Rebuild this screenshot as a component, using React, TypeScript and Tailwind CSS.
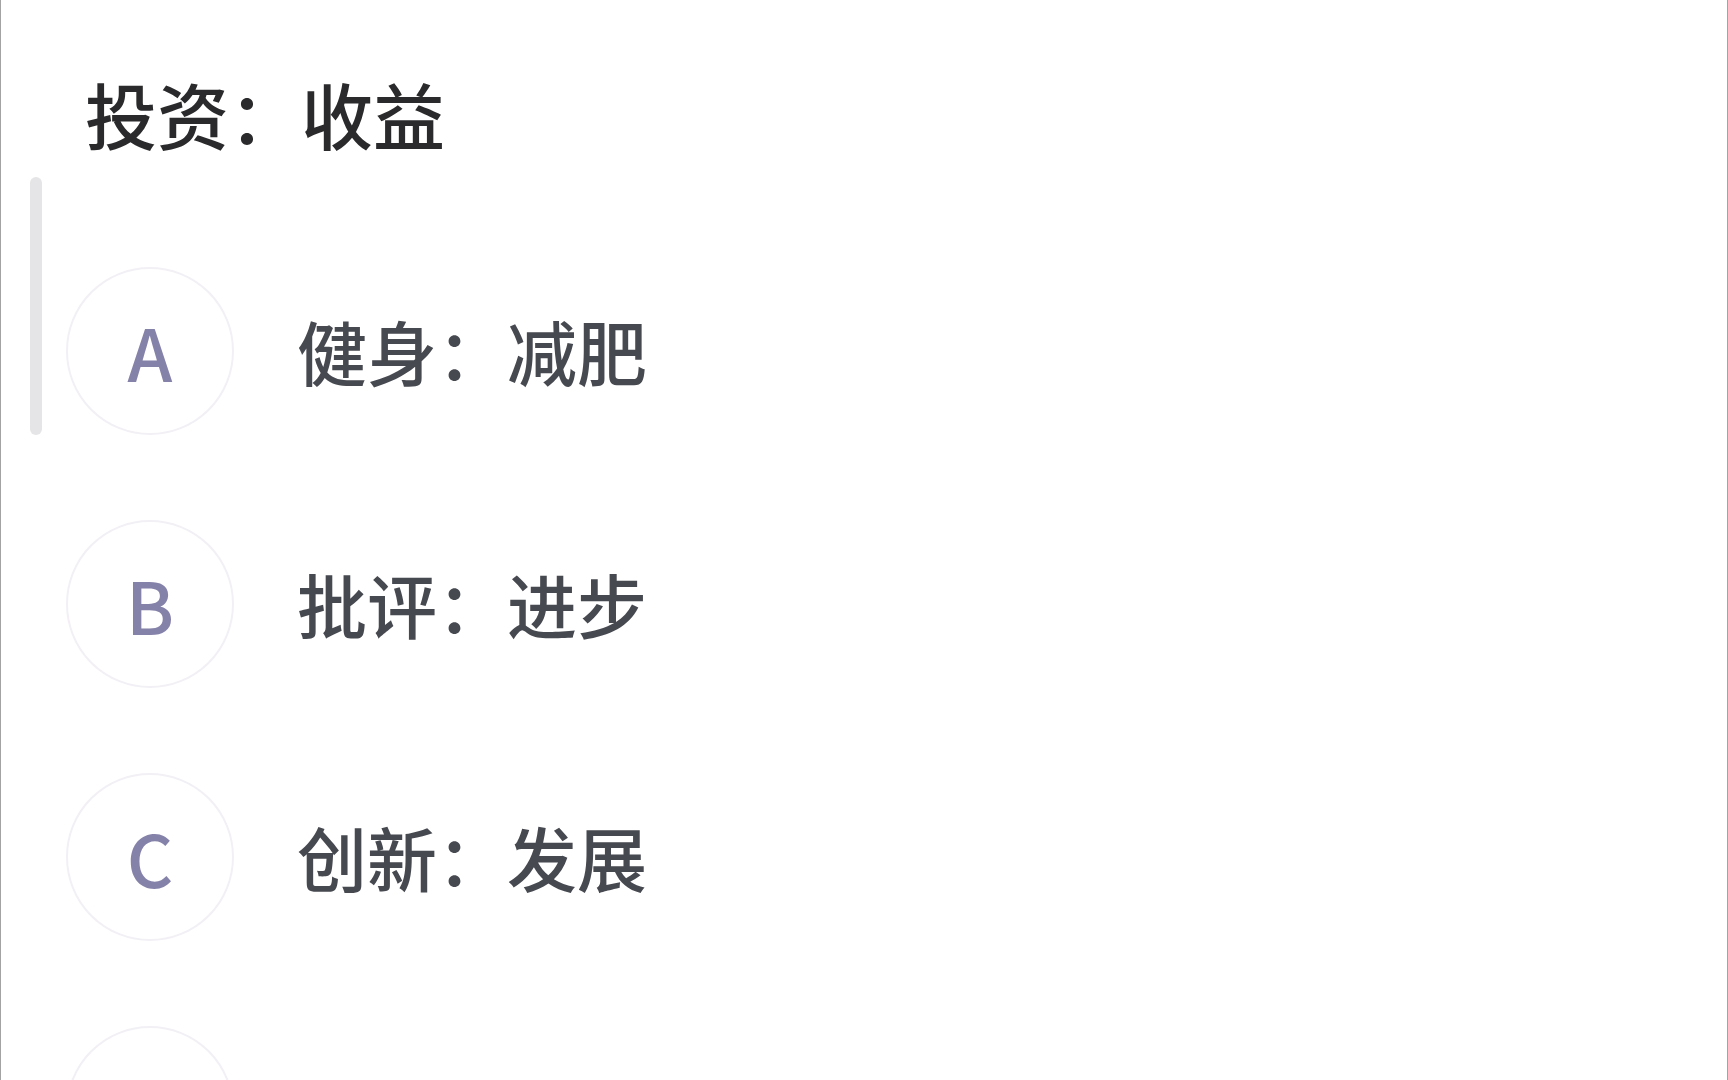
const options = [
  { key: "A", text: "健身：减肥" },
  { key: "B", text: "批评：进步" },
  { key: "C", text: "创新：发展" },
  { key: "D", text: "付出：回报" },
];

const cjk = { fontFamily: '"Noto Sans CJK SC", "Noto Sans", sans-serif' };

export default function App() {
  return (
    <div
      className="relative h-[1080px] w-[1728px] overflow-hidden border-x border-[#a3a3a3] bg-white"
      style={cjk}
    >
      {/* scroll indicator */}
      <div className="absolute left-[29px] top-[177px] h-[258px] w-[12px] rounded-full bg-[#e5e5e7]" />

      <div className="pl-[84px] pt-[77px]">
        <div className="h-[72px] text-[72px] font-medium leading-[72px] text-[#2a2a2c]">投资：收益</div>
      </div>

      <div className="mt-[75px] flex flex-col pl-[65px]">
        {options.map((o) => (
          <div key={o.key} className="flex h-[253px] shrink-0 items-center gap-[63px]">
            <div className="flex h-[168px] w-[168px] shrink-0 items-center justify-center rounded-full border-2 border-[#f2f0f5]">
              <span className="text-[72px] font-medium leading-none text-[#8582a9]">{o.key}</span>
            </div>
            <span className="text-[70px] font-medium leading-none text-[#464950]">{o.text}</span>
          </div>
        ))}
      </div>
    </div>
  );
}
